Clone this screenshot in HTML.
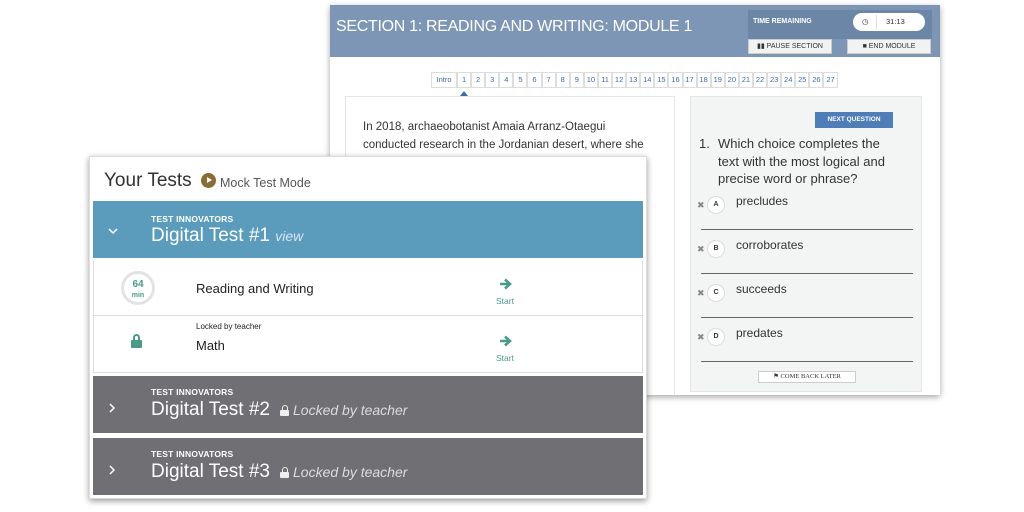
<!DOCTYPE html>
<html><head><meta charset="utf-8"><style>
*{box-sizing:border-box;margin:0;padding:0}
body{width:1024px;height:512px;background:#fff;position:relative;overflow:hidden;font-family:"Liberation Sans",sans-serif}
.a{position:absolute}
#back{left:330px;top:5px;width:610px;height:390px;background:#fff;box-shadow:0 2px 6px rgba(0,0,0,.35)}
#hdr{left:0;top:0;width:610px;height:52px;background:#7d96b5}
#card{left:89px;top:156px;width:558px;height:343px;background:#fff;box-shadow:0 2px 6px rgba(0,0,0,.4);border:1px solid #ddd}
.btn{background:#f2f2f2;border:1px solid #ccc;font-size:7px;color:#333;text-align:center;line-height:14px}
.nav{display:flex;position:absolute;left:101px;top:67px}
.nav div{height:16px;border:1px solid #ddd;font-size:7.5px;color:#3a6ea8;text-align:center;line-height:14px;width:14.1px;margin-right:0}
.opt{position:absolute;left:10px;width:212px;height:44px;border-bottom:1px solid #666}
.opt .x{position:absolute;left:-4px;top:14px;font-size:9px;color:#888}
.opt .c{position:absolute;left:6px;top:10px;width:18px;height:18px;border-radius:50%;background:#fff;border:1px solid #ddd;font-size:7px;font-weight:bold;text-align:center;line-height:16px;color:#333}
.opt .t{position:absolute;left:35px;top:8px;font-size:12px;color:#333}
.grow{position:absolute;left:3px;width:550px;height:57px;background:#706f74;color:#fff}
.small{font-size:8.5px;font-weight:bold;letter-spacing:.2px}
.lk{display:inline-block;position:relative;width:9px;height:11px;margin:0 4px 0 10px;vertical-align:-1px}
.lk:before{content:"";position:absolute;left:0;bottom:0;width:9px;height:6px;background:#eee;border-radius:1px}
.lk:after{content:"";position:absolute;left:1.5px;top:0;width:6px;height:6px;border:1.5px solid #eee;border-bottom:none;border-radius:3px 3px 0 0;box-sizing:border-box}
.arr{position:absolute;width:14px;height:12px}
</style></head><body>
<div id="back" class="a">
 <div id="hdr" class="a">
  <div class="a" style="left:6px;top:13px;color:#fff;font-size:16px;letter-spacing:-.3px">SECTION 1: READING AND WRITING: MODULE 1</div>
  <div class="a" style="left:418px;top:5px;width:184px;height:29px;background:#6c86a7"></div>
  <div class="a" style="left:423px;top:13px;color:#fff;font-size:7px;font-weight:bold">TIME REMAINING</div>
  <div class="a" style="left:523px;top:8px;width:72px;height:18px;background:#fff;border-radius:9px;font-size:7.5px;color:#333;line-height:18px"><span style="position:absolute;left:9px">◷</span><span style="position:absolute;left:23px;top:2px;height:14px;border-left:1px solid #ddd"></span><span style="position:absolute;left:33px">31:13</span></div>
  <div class="a btn" style="left:418px;top:34px;width:84px;height:15px">▮▮ PAUSE SECTION</div>
  <div class="a btn" style="left:517px;top:34px;width:84px;height:15px">■ END MODULE</div>
 </div>
 <div class="nav"><div style="width:26px">Intro</div><div>1</div><div>2</div><div>3</div><div>4</div><div>5</div><div>6</div><div>7</div><div>8</div><div>9</div><div>10</div><div>11</div><div>12</div><div>13</div><div>14</div><div>15</div><div>16</div><div>17</div><div>18</div><div>19</div><div>20</div><div>21</div><div>22</div><div>23</div><div>24</div><div>25</div><div>26</div><div>27</div></div>
 <div class="a" style="left:130px;top:86px;width:0;height:0;border-left:4px solid transparent;border-right:4px solid transparent;border-bottom:5px solid #3a6ea8"></div>
 <div class="a" style="left:15px;top:91px;width:330px;height:299px;border:1px solid #e6e6e6;border-bottom:none"></div>
 <div class="a" style="left:33px;top:113px;width:285px;font-size:11.5px;line-height:18px;color:#333">In 2018, archaeobotanist Amaia Arranz-Otaegui conducted research in the Jordanian desert, where she</div>
 <div class="a" style="left:360px;top:91px;width:232px;height:296px;background:#f3f4f4;border:1px solid #e6e6e6">
  <div class="a" style="left:124px;top:15px;width:78px;height:16px;background:#4f7db8;color:#fff;font-size:6.5px;font-weight:bold;text-align:center;line-height:16px">NEXT QUESTION</div>
  <div class="a" style="left:8px;top:38px;font-size:13px;color:#333;line-height:17.5px">1.</div>
  <div class="a" style="left:27px;top:38px;width:185px;font-size:13px;color:#333;line-height:17.5px">Which choice completes the text with the most logical and precise word or phrase?</div>
  <div class="opt" style="top:89px"><span class="x">✖</span><span class="c">A</span><span class="t">precludes</span></div>
  <div class="opt" style="top:133px"><span class="x">✖</span><span class="c">B</span><span class="t">corroborates</span></div>
  <div class="opt" style="top:177px"><span class="x">✖</span><span class="c">C</span><span class="t">succeeds</span></div>
  <div class="opt" style="top:221px"><span class="x">✖</span><span class="c">D</span><span class="t">predates</span></div>
  <div class="a" style="left:67px;top:274px;width:98px;height:12px;background:#fff;border:1px solid #ccc;font-family:'Liberation Serif',serif;font-size:6.5px;text-align:center;line-height:10px;color:#333">⚑ COME BACK LATER</div>
 </div>
</div>
<div id="card" class="a">
 <div class="a" style="left:14px;top:13px;font-size:19px;color:#333">Your Tests</div>
 <div class="a" style="left:111px;top:16px;width:15px;height:15px;border-radius:50%;background:#8a6a35"></div>
 <div class="a" style="left:117px;top:20px;width:0;height:0;border-top:3.5px solid transparent;border-bottom:3.5px solid transparent;border-left:5px solid #fff"></div>
 <div class="a" style="left:130px;top:19px;font-size:12.5px;color:#555">Mock Test Mode</div>
 <div class="a" style="left:3px;top:44px;width:550px;height:57px;background:#5b9cbd;color:#fff">
  <div class="a small" style="left:58px;top:13px">TEST INNOVATORS</div>
  <div class="a" style="left:58px;top:24px;font-size:19px">Digital Test #1 <i style="font-size:14px;color:#d5e6f0">view</i></div>
  <svg class="a" style="left:15px;top:27px" width="10" height="7"><path d="M1 1 L5 5 L9 1" stroke="#fff" stroke-width="1.5" fill="none"/></svg>
 </div>
 <div class="a" style="left:3px;top:103px;width:550px;height:56px;border:1px solid #ddd;border-top:none"></div>
 <div class="a" style="left:31px;top:114px;width:34px;height:34px;border-radius:50%;border:3px solid #e3e3e3;text-align:center;color:#4a9a8a;font-weight:bold;font-size:10px;line-height:10px;padding-top:6px">64<br><span style="font-size:7px">min</span></div>
 <div class="a" style="left:106px;top:124px;font-size:13px;color:#222">Reading and Writing</div>
 <svg class="arr" style="left:409px;top:121px" viewBox="0 0 14 12"><path d="M1 6 H10 M6 1.5 L11 6 L6 10.5" stroke="#4a9a8a" stroke-width="2.6" fill="none"/></svg>
 <div class="a" style="left:406px;top:139px;color:#4a9a8a;font-size:8.5px">Start</div>
 <div class="a" style="left:3px;top:160px;width:550px;height:56px;border:1px solid #ddd;border-top:none"></div>
 <div class="a" style="left:106px;top:165px;font-size:8px;color:#222">Locked by teacher</div>
 <div class="a" style="left:106px;top:181px;font-size:13px;color:#222">Math</div>
 <div class="a" style="left:41px;top:183px;width:11px;height:8px;background:#4a9a8a;border-radius:1px"></div>
 <div class="a" style="left:43px;top:177px;width:7px;height:8px;border:2px solid #4a9a8a;border-bottom:none;border-radius:4px 4px 0 0"></div>
 <svg class="arr" style="left:409px;top:178px" viewBox="0 0 14 12"><path d="M1 6 H10 M6 1.5 L11 6 L6 10.5" stroke="#4a9a8a" stroke-width="2.6" fill="none"/></svg>
 <div class="a" style="left:406px;top:196px;color:#4a9a8a;font-size:8.5px">Start</div>
 <div class="grow" style="top:219px">
  <div class="a small" style="left:58px;top:11px">TEST INNOVATORS</div>
  <div class="a" style="left:58px;top:23px;font-size:19px;white-space:nowrap">Digital Test #2<span class="lk"></span><i style="font-size:14px;color:#ddd">Locked by teacher</i></div>
  <svg class="a" style="left:16px;top:27px" width="6" height="10"><path d="M1 1 L5 5 L1 9" stroke="#fff" stroke-width="1.5" fill="none"/></svg>
 </div>
 <div class="grow" style="top:281px">
  <div class="a small" style="left:58px;top:11px">TEST INNOVATORS</div>
  <div class="a" style="left:58px;top:23px;font-size:19px;white-space:nowrap">Digital Test #3<span class="lk"></span><i style="font-size:14px;color:#ddd">Locked by teacher</i></div>
  <svg class="a" style="left:16px;top:27px" width="6" height="10"><path d="M1 1 L5 5 L1 9" stroke="#fff" stroke-width="1.5" fill="none"/></svg>
 </div>
</div>
</body></html>
